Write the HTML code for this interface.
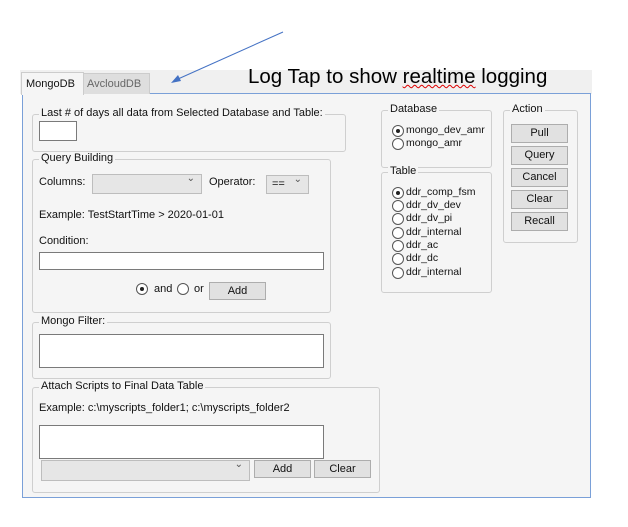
<!DOCTYPE html><html><head><style>
body{margin:0;width:628px;height:527px;background:#fff;position:relative;font-family:"Liberation Sans",sans-serif;font-size:11px;color:#111;overflow:hidden}
.a{position:absolute}
.g{position:absolute;border:1px solid #cfcfcf;border-radius:3px}
.lg{position:absolute;top:-8px;left:6px;background:#f5f5f5;padding:0 2px;font-size:11px}
.in{position:absolute;background:#fff;border:1px solid #7a7a7a}
.bt{position:absolute;background:#e1e1e1;border:1px solid #adadad;text-align:center;font-size:11px;line-height:16px}
.sel{position:absolute;background:#e6e6e6;border:1px solid #bdbdbd}
.sel:after{content:"⌄";position:absolute;right:6px;top:-2px;font-size:10px;color:#555}
.r{position:absolute;width:10px;height:10px;border:1px solid #555;border-radius:50%;background:#fff}
.r.on:after{content:"";position:absolute;left:3px;top:3px;width:4px;height:4px;border-radius:50%;background:#222}
.t{position:absolute;white-space:nowrap}
.s{font-size:10.5px}
</style></head><body>
<div class="a" style="left:20px;top:70px;width:572px;height:24px;background:#f0f0f0"></div>
<svg class="a" style="left:0;top:0" width="628" height="100"><line x1="283" y1="32" x2="178" y2="79" stroke="#4472c4" stroke-width="1"/><polygon points="171,83 178,75 181,81" fill="#4472c4"/></svg>
<div class="t" style="left:248px;top:65px;font-size:20.5px;color:#000">Log Tap to show <span style="text-decoration:underline wavy #d00;text-decoration-thickness:1px">realtime</span> logging</div>
<div class="a" style="left:22px;top:93px;width:567px;height:403px;background:#f5f5f5;border:1px solid #7aa0d8"></div>
<div class="a" style="left:21px;top:72px;width:61px;height:22px;background:#f5f5f5;border:1px solid #ccc;border-bottom:none"></div>
<div class="t" style="left:26px;top:78px">MongoDB</div>
<div class="a" style="left:83px;top:73px;width:65px;height:20px;background:#dedede;border:1px solid #ccc;border-bottom:none"></div>
<div class="t" style="left:87px;top:78px;color:#666">AvcloudDB</div>

<div class="g" style="left:32px;top:114px;width:312px;height:36px"><span class="lg">Last # of days all data from Selected Database and Table:</span></div>
<div class="in" style="left:39px;top:121px;width:36px;height:18px"></div>

<div class="g" style="left:32px;top:159px;width:297px;height:152px"><span class="lg">Query Building</span></div>
<div class="t" style="left:39px;top:176px">Columns:</div>
<div class="sel" style="left:92px;top:174px;width:108px;height:18px"></div>
<div class="t" style="left:209px;top:176px">Operator:</div>
<div class="sel" style="left:266px;top:175px;width:41px;height:17px"><span class="t" style="left:5px;top:2px">==</span></div>
<div class="t" style="left:39px;top:209px">Example: TestStartTime &gt; 2020-01-01</div>
<div class="t" style="left:39px;top:235px">Condition:</div>
<div class="in" style="left:39px;top:252px;width:283px;height:16px"></div>
<div class="r on" style="left:136px;top:283px"></div><div class="t" style="left:154px;top:283px">and</div>
<div class="r" style="left:177px;top:283px"></div><div class="t" style="left:194px;top:283px">or</div>
<div class="bt" style="left:209px;top:282px;width:55px;height:16px">Add</div>

<div class="g" style="left:32px;top:322px;width:297px;height:55px"><span class="lg">Mongo Filter:</span></div>
<div class="in" style="left:39px;top:334px;width:283px;height:32px"></div>

<div class="g" style="left:32px;top:387px;width:346px;height:104px"><span class="lg">Attach Scripts to Final Data Table</span></div>
<div class="t" style="left:39px;top:402px">Example: c:\myscripts_folder1; c:\myscripts_folder2</div>
<div class="in" style="left:39px;top:425px;width:283px;height:32px"></div>
<div class="sel" style="left:41px;top:460px;width:207px;height:19px"></div>
<div class="bt" style="left:254px;top:460px;width:55px;height:16px">Add</div>
<div class="bt" style="left:314px;top:460px;width:55px;height:16px">Clear</div>

<div class="g" style="left:381px;top:110px;width:109px;height:56px"><span class="lg">Database</span></div>
<div class="r on" style="left:392px;top:125px"></div><div class="t s" style="left:406px;top:124px">mongo_dev_amr</div>
<div class="r" style="left:392px;top:138px"></div><div class="t s" style="left:406px;top:137px">mongo_amr</div>

<div class="g" style="left:381px;top:172px;width:109px;height:119px"><span class="lg">Table</span></div>
<div class="r on" style="left:392px;top:187px"></div><div class="t s" style="left:406px;top:186px">ddr_comp_fsm</div>
<div class="r" style="left:392px;top:200px"></div><div class="t s" style="left:406px;top:199px">ddr_dv_dev</div>
<div class="r" style="left:392px;top:213px"></div><div class="t s" style="left:406px;top:212px">ddr_dv_pi</div>
<div class="r" style="left:392px;top:227px"></div><div class="t s" style="left:406px;top:226px">ddr_internal</div>
<div class="r" style="left:392px;top:240px"></div><div class="t s" style="left:406px;top:239px">ddr_ac</div>
<div class="r" style="left:392px;top:253px"></div><div class="t s" style="left:406px;top:252px">ddr_dc</div>
<div class="r" style="left:392px;top:267px"></div><div class="t s" style="left:406px;top:266px">ddr_internal</div>

<div class="g" style="left:503px;top:110px;width:73px;height:131px"><span class="lg">Action</span></div>
<div class="bt" style="left:511px;top:124px;width:55px;height:17px">Pull</div>
<div class="bt" style="left:511px;top:146px;width:55px;height:17px">Query</div>
<div class="bt" style="left:511px;top:168px;width:55px;height:17px">Cancel</div>
<div class="bt" style="left:511px;top:190px;width:55px;height:17px">Clear</div>
<div class="bt" style="left:511px;top:212px;width:55px;height:17px">Recall</div>
</body></html>
